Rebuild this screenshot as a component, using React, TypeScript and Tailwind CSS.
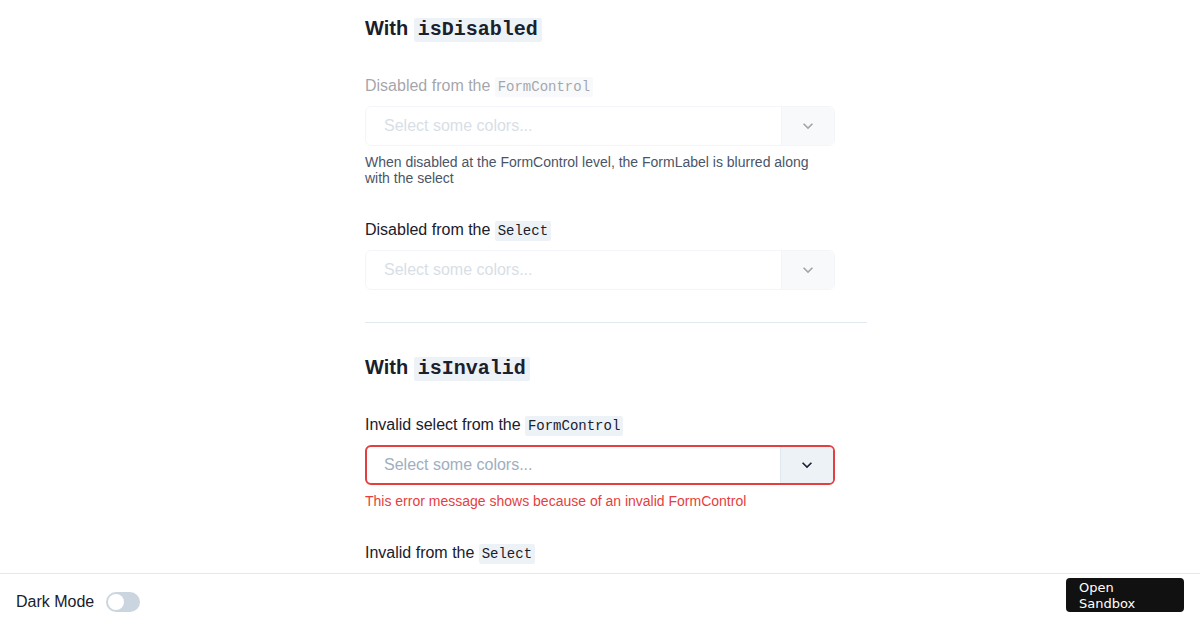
import React from "react";

function Code({ children, big }: { children: React.ReactNode; big?: boolean }) {
  return (
    <code
      className={
        big
          ? "inline-block rounded-[2px] bg-[#edf2f7] px-[0.2em] font-['Liberation_Mono',monospace] text-[20px] leading-[24px]"
          : "inline-block rounded-[2px] bg-[#edf2f7] px-[0.2em] font-['Liberation_Mono',monospace] text-[14px] leading-[20px]"
      }
    >
      {children}
    </code>
  );
}

function Chevron() {
  return (
    <svg viewBox="0 0 24 24" className="h-5 w-5 text-[#1a202c]" fill="currentColor">
      <path d="M16.59 8.59L12 13.17 7.41 8.59 6 10l6 6 6-6z" />
    </svg>
  );
}

function FakeSelect({ disabled, invalid }: { disabled?: boolean; invalid?: boolean }) {
  return (
    <div
      className={
        "flex h-10 w-[470px] overflow-hidden rounded-[6px] " +
        (invalid ? "border-2 border-[#e53e3e]" : "border border-[#e2e8f0]") +
        (disabled ? " opacity-40" : "")
      }
    >
      <div className={"flex flex-1 items-center text-[16px] text-[#a0aec0] " + (invalid ? "pl-[17px]" : "pl-[18px]")}>
        Select some colors...
      </div>
      <div className="flex w-[53px] items-center justify-center border-l border-[#e2e8f0] bg-[#edf2f7]">
        <Chevron />
      </div>
    </div>
  );
}

function Label({ children, disabled }: { children: React.ReactNode; disabled?: boolean }) {
  return (
    <div className={"mb-2 text-[16px] leading-[24px] " + (disabled ? "opacity-40" : "")}>{children}</div>
  );
}

export default function App() {
  return (
    <div className="min-h-screen bg-white font-['Liberation_Sans',Arial,sans-serif] text-[#1a202c]">
      <main className="w-[867px] pb-[120px] pl-[365px] pt-[16px]">
        <h2 className="text-[20px] font-bold leading-[24px]">
          With <Code big>isDisabled</Code>
        </h2>

        <div className="mt-8">
          <Label disabled>
            Disabled from the <Code>FormControl</Code>
          </Label>
          <FakeSelect disabled />
          <p className="mt-2 w-[470px] text-[14px] leading-[16px] text-[#4a5568]">
            When disabled at the FormControl level, the FormLabel is blurred along with the select
          </p>
        </div>

        <div className="mt-8">
          <Label>
            Disabled from the <Code>Select</Code>
          </Label>
          <FakeSelect disabled />
        </div>

        <hr className="mt-8 border-t border-[#e2e8f0]" />

        <h2 className="mt-[32px] text-[20px] font-bold leading-[24px]">
          With <Code big>isInvalid</Code>
        </h2>

        <div className="mt-8">
          <Label>
            Invalid select from the <Code>FormControl</Code>
          </Label>
          <FakeSelect invalid />
          <p className="mt-2 text-[14px] leading-[16px] text-[#e53e3e]">
            This error message shows because of an invalid FormControl
          </p>
        </div>

        <div className="mt-8">
          <Label>
            Invalid from the <Code>Select</Code>
          </Label>
          <FakeSelect invalid />
        </div>
      </main>

      <footer className="fixed bottom-0 left-0 right-0 flex h-[57px] justify-between border-t border-[#e2e8f0] bg-white px-4">
        <div className="flex items-center gap-3">
          <span className="text-[16px]">Dark Mode</span>
          <span className="flex h-5 w-[34px] items-center rounded-full bg-[#cbd5e0] p-[2px]">
            <span className="h-4 w-4 rounded-full bg-white" />
          </span>
        </div>
        <button className="mt-1 h-[34px] w-[118px] self-start rounded-[4px] bg-[#111111] pl-[13px] pr-[24px] pt-[2px] text-left font-['DejaVu_Sans',sans-serif] text-[13px] leading-[16px] text-white">
          Open Sandbox
        </button>
      </footer>
    </div>
  );
}
